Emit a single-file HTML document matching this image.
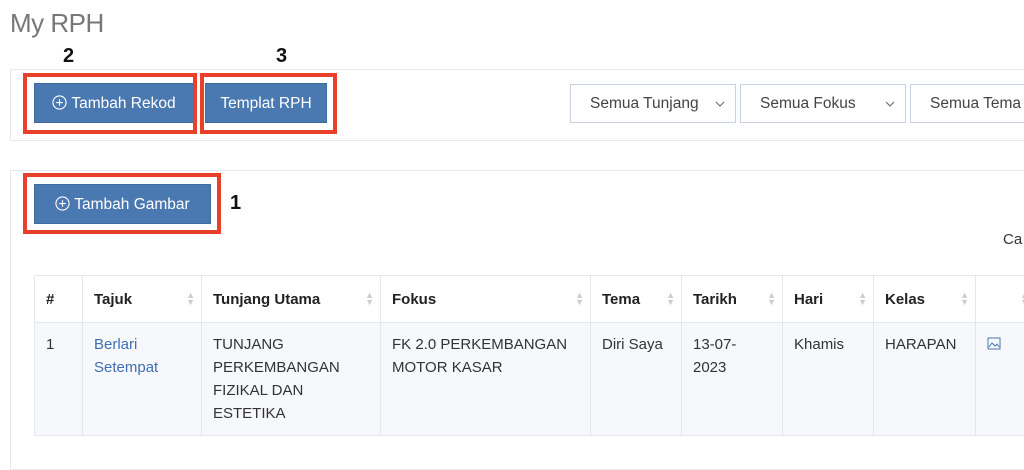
<!DOCTYPE html>
<html><head><meta charset="utf-8"><style>
*{box-sizing:border-box;margin:0;padding:0}
body{width:1024px;height:447px;overflow:hidden;background:#fff;font-family:"Liberation Sans",sans-serif;color:#333;position:relative}
.a{position:absolute}
h1{position:absolute;left:10px;top:8px;font-size:26px;font-weight:normal;color:#777;letter-spacing:-0.5px}
.panel{position:absolute;left:10px;right:-5px;border:1px solid #e6e9ef}
.btn{position:absolute;background:#4a78b0;color:#fff;font-size:15.5px;height:40px;line-height:40px;text-align:center;border:1px solid #3f6aa0}
.btn svg{vertical-align:-2px;margin-right:4px}
.red{position:absolute;border:4px solid #e8402a}
.num{position:absolute;font-size:20px;font-weight:bold;color:#111}
.sel{position:absolute;top:84px;height:39px;width:166px;border:1px solid #c9d2e3;font-size:15.5px;color:#444;line-height:37px;padding-left:19px;white-space:nowrap;overflow:hidden}
.sel svg{position:absolute;right:10px;top:16px}
table{position:absolute;left:34px;top:275px;width:1001px;border-collapse:collapse;font-size:15px;table-layout:fixed}
th,td{border:1px solid #e3e7ee;text-align:left;vertical-align:top}
th{height:47px;vertical-align:middle;padding:0 11px;font-weight:bold;position:relative;color:#222}
th i{position:absolute;right:6px;top:16px;font-style:normal;font-size:9px;color:#ccc;line-height:7px}
td{background:#f6f8fc;padding:10px 11px;line-height:23px;height:111px;white-space:nowrap}
</style></head><body>
<h1>My RPH</h1>
<div class="panel" style="top:69px;height:72px"></div>
<div class="panel" style="top:170px;height:300px"></div>
<div class="num" style="left:63px;top:45px">2</div>
<div class="num" style="left:276px;top:45px">3</div>
<div class="btn" style="left:34px;top:83px;width:160px"><svg width="15" height="15" viewBox="0 0 16 16"><circle cx="8" cy="8" r="7" fill="none" stroke="#fff" stroke-width="1.2"/><path d="M8 4.5v7M4.5 8h7" stroke="#fff" stroke-width="1.2"/></svg>Tambah Rekod</div>
<div class="red" style="left:23px;top:73px;width:174px;height:61px"></div>
<div class="btn" style="left:205px;top:83px;width:122px">Templat RPH</div>
<div class="red" style="left:200px;top:73px;width:137px;height:61px"></div>
<div class="sel" style="left:570px">Semua Tunjang<svg width="10" height="6" viewBox="0 0 10 6"><path d="M1 1l4 4 4-4" fill="none" stroke="#666"/></svg></div>
<div class="sel" style="left:740px">Semua Fokus<svg width="10" height="6" viewBox="0 0 10 6"><path d="M1 1l4 4 4-4" fill="none" stroke="#666"/></svg></div>
<div class="sel" style="left:910px;width:130px">Semua Tema</div>
<div class="btn" style="left:34px;top:184px;width:177px"><svg width="15" height="15" viewBox="0 0 16 16"><circle cx="8" cy="8" r="7" fill="none" stroke="#fff" stroke-width="1.2"/><path d="M8 4.5v7M4.5 8h7" stroke="#fff" stroke-width="1.2"/></svg>Tambah Gambar</div>
<div class="red" style="left:23px;top:173px;width:198px;height:61px"></div>
<div class="num" style="left:230px;top:192px">1</div>
<div class="a" style="left:1003px;top:231px;font-size:15px;color:#333">Ca</div>
<table>
<colgroup><col style="width:48px"><col style="width:119px"><col style="width:179px"><col style="width:210px"><col style="width:91px"><col style="width:101px"><col style="width:91px"><col style="width:102px"><col style="width:60px"></colgroup>
<tr><th>#</th><th>Tajuk<i>▲<br>▼</i></th><th>Tunjang Utama<i>▲<br>▼</i></th><th>Fokus<i>▲<br>▼</i></th><th>Tema<i>▲<br>▼</i></th><th>Tarikh<i>▲<br>▼</i></th><th>Hari<i>▲<br>▼</i></th><th>Kelas<i>▲<br>▼</i></th><th><i>▲<br>▼</i></th></tr>
<tr><td>1</td><td style="color:#3f6fb0">Berlari<br>Setempat</td><td>TUNJANG<br>PERKEMBANGAN<br>FIZIKAL DAN<br>ESTETIKA</td><td>FK 2.0 PERKEMBANGAN<br>MOTOR KASAR</td><td>Diri Saya</td><td>13-07-<br>2023</td><td>Khamis</td><td>HARAPAN</td><td><svg width="14" height="13" viewBox="0 0 14 13" style="margin-top:4px"><rect x="1" y="1" width="12" height="11" fill="none" stroke="#4a78b0"/><path d="M2 10l3-4 3 3 2-2 2 3" fill="none" stroke="#4a78b0"/></svg></td></tr>
</table>
</body></html>
